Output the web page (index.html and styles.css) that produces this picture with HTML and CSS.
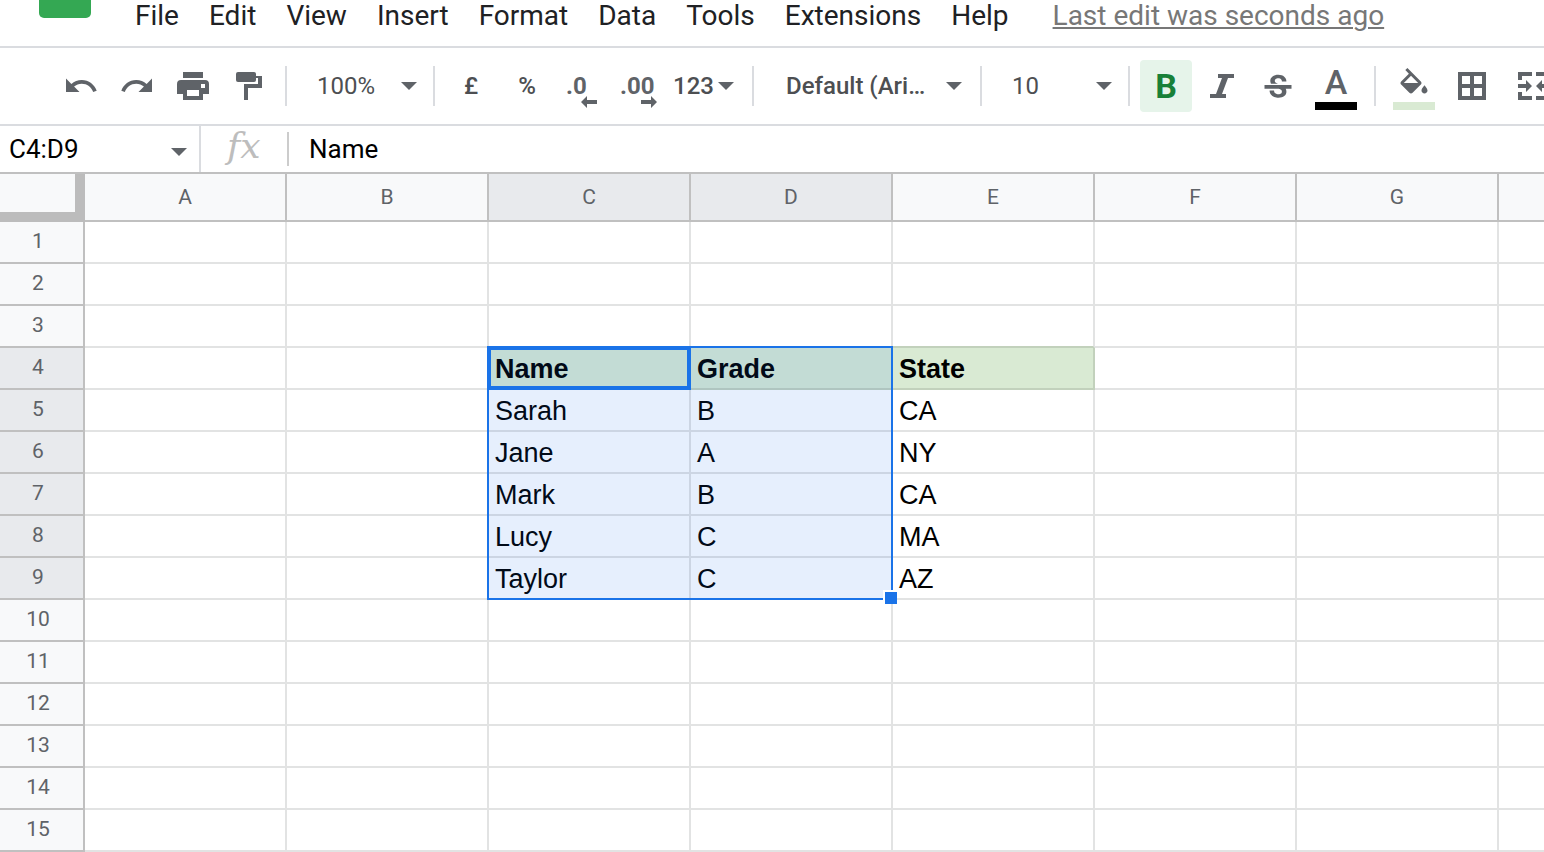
FILE: index.html
```html
<!DOCTYPE html>
<html lang="en">
<head>
<meta charset="utf-8">
<title>Spreadsheet</title>
<link rel="stylesheet" href="styles.css">
</head>
<body>
<header class="menubar">
  <span class="logo"></span>
  <nav class="menus">
    <button>File</button>
    <button>Edit</button>
    <button>View</button>
    <button>Insert</button>
    <button>Format</button>
    <button>Data</button>
    <button>Tools</button>
    <button>Extensions</button>
    <button>Help</button>
  </nav>
  <a class="last-edit" href="#">Last edit was seconds ago</a>
</header>

<div class="toolbar">
  <button class="tool" aria-label="Undo"><svg width="36" height="36" viewBox="0 0 24 24"><path d="M12.5 8c-2.65 0-5.05.99-6.9 2.6L2 7v9h9l-3.62-3.62c1.39-1.16 3.16-1.88 5.12-1.88 3.54 0 6.55 2.31 7.6 5.5l2.37-.78C21.08 11.03 17.15 8 12.5 8z"/></svg></button>
  <button class="tool" aria-label="Redo"><svg width="36" height="36" viewBox="0 0 24 24"><path d="M18.4 10.6C16.55 8.99 14.15 8 11.5 8c-4.65 0-8.58 3.03-9.96 7.22L3.9 16c1.05-3.19 4.05-5.5 7.6-5.5 1.95 0 3.73.72 5.12 1.88L13 16h9V7l-3.6 3.6z"/></svg></button>
  <button class="tool" aria-label="Print"><svg width="32" height="28" viewBox="0 0 32 28"><path fill-rule="evenodd" d="M6 0h20v6H6zM4 8h24a4 4 0 0 1 4 4v10h-6v6H6v-6H0V12a4 4 0 0 1 4-4zM10 18v6h12v-6zM24 12v4h4v-4z"/></svg></button>
  <button class="tool" aria-label="Paint format"><svg width="26" height="28" viewBox="0 0 26 28"><rect width="20" height="10" rx="2"/><path d="M20 4h6v12H12v12H8V12h14V6h-2z"/></svg></button>
  <span class="sep"></span>
  <span class="pick pick-narrow"><select aria-label="Zoom"><option>100%</option></select><i class="caret"></i></span>
  <span class="sep"></span>
  <button class="tool label" aria-label="Format as currency">£</button>
  <button class="tool label" aria-label="Format as percent">%</button>
  <button class="tool" aria-label="Decrease decimal places"><svg width="52" height="52" viewBox="0 0 52 52"><text class="digits" x="9" y="34">.0</text><path d="M24 42l6-6v4h10v4H30v4z"/></svg></button>
  <button class="tool" aria-label="Increase decimal places"><svg width="52" height="52" viewBox="0 0 52 52"><text class="digits" x="7" y="34">.00</text><path d="M44 42l-6-6v4H28v4h10v4z"/></svg></button>
  <button class="tool label formats" aria-label="More formats">123<i class="caret"></i></button>
  <span class="sep"></span>
  <span class="pick pick-font"><select aria-label="Font"><option>Default (Ari…</option></select><i class="caret"></i></span>
  <span class="sep"></span>
  <span class="pick pick-narrow"><select aria-label="Font size"><option>10</option></select><i class="caret"></i></span>
  <span class="sep"></span>
  <button class="tool bold on" aria-label="Bold" aria-pressed="true">B</button>
  <button class="tool" aria-label="Italic"><svg width="24" height="24" viewBox="0 0 24 24"><path d="M8 0h16v4h-6l-6 16h4v4H0v-4h6l6-16H8z"/></svg></button>
  <button class="tool" aria-label="Strikethrough"><svg width="36" height="32" viewBox="0 0 24 21"><path d="M7.24 8.75c-.26-.48-.39-1.03-.39-1.67 0-.61.13-1.16.4-1.67.26-.5.63-.93 1.11-1.29.48-.35 1.05-.63 1.7-.83.66-.19 1.39-.29 2.18-.29.81 0 1.54.11 2.21.34.66.22 1.23.54 1.69.94.47.4.83.88 1.08 1.43.25.55.38 1.15.38 1.81h-3.01c0-.31-.05-.59-.15-.85-.09-.27-.24-.49-.44-.68-.2-.19-.45-.33-.75-.44-.3-.1-.66-.16-1.06-.16-.39 0-.74.04-1.03.13-.29.09-.53.21-.72.36-.19.16-.34.34-.44.55-.1.21-.15.43-.15.66 0 .48.25.88.74 1.21.38.25.77.48 1.41.7H7.39c-.05-.08-.11-.17-.15-.25zM21 12.300v-2.500H3v2.500h9.620c.18.07.4.14.55.2.37.17.66.34.87.51.21.17.35.36.43.57.07.2.11.43.11.69 0 .23-.05.45-.14.66-.09.2-.23.38-.42.53-.19.15-.42.26-.71.35-.29.08-.63.13-1.01.13-.43 0-.83-.04-1.180-.13s-.66-.23-.91-.42c-.25-.19-.45-.44-.59-.75-.14-.31-.25-.76-.25-1.210H6.400c0 .55.08 1.13.24 1.58.16.45.37.85.65 1.21.28.35.6.66.98.92.37.26.78.48 1.220.65.44.17.9.3 1.380.39.48.08.96.13 1.440.13.8 0 1.530-.09 2.180-.28s1.210-.45 1.670-.79c.46-.34.82-.77 1.070-1.270s.38-1.070.38-1.710c0-.6-.1-1.140-.31-1.610-.05-.11-.11-.23-.17-.33H21z"/></svg></button>
  <button class="tool color" aria-label="Text color"><span class="letter">A</span><i class="swatch swatch-text"></i></button>
  <span class="sep"></span>
  <button class="tool color" aria-label="Fill color"><svg width="36" height="26" viewBox="0 0 36 26"><path transform="scale(1.5)" d="M16.56 8.94L7.62 0 6.21 1.41l2.38 2.38-5.15 5.15c-.59.59-.59 1.54 0 2.12l5.5 5.5c.29.29.68.44 1.06.44s.77-.15 1.06-.44l5.5-5.5c.59-.58.59-1.53 0-2.12zM5.21 10L10 5.21 14.79 10H5.21zM19 11.5s-2 2.17-2 3.5c0 1.1.9 2 2 2s2-.9 2-2c0-1.33-2-3.5-2-3.5z"/></svg><i class="swatch swatch-fill"></i></button>
  <button class="tool" aria-label="Borders"><svg width="28" height="28" viewBox="0 0 28 28"><path fill-rule="evenodd" d="M0 0h28v28H0zM4 4v8h8V4zM16 4v8h8V4zM4 16v8h8v-8zM16 16v8h8v-8z"/></svg></button>
  <button class="tool merge" aria-label="Merge cells"><svg width="32" height="28" viewBox="0 0 32 28"><path d="M0 0h14v4H4v4H0zM0 28h14v-4H4v-4H0zM0 12h8V8l6 6-6 6v-4H0zM32 0H18v4h10v4h4zM32 28H18v-4h10v-4h4zM32 12h-8V8l-6 6 6 6v-4h8z"/></svg></button>
</div>

<div class="formula-bar">
  <span class="name-box"><input aria-label="Name box" value="C4:D9"><i class="caret"></i></span>
  <label class="fx" for="formula">fx</label>
  <input class="formula" id="formula" value="Name">
</div>

<main class="sheet">
  <table class="grid">
    <colgroup><col class="col-num"><col><col><col><col><col><col><col><col></colgroup>
    <thead>
      <tr><td class="corner"></td><th>A</th><th>B</th><th class="sel">C</th><th class="sel">D</th><th>E</th><th>F</th><th>G</th><th></th></tr>
    </thead>
    <tbody>
      <tr><th>1</th><td></td><td></td><td></td><td></td><td></td><td></td><td></td><td></td></tr>
      <tr><th>2</th><td></td><td></td><td></td><td></td><td></td><td></td><td></td><td></td></tr>
      <tr><th>3</th><td></td><td></td><td class="edge"></td><td class="edge"></td><td class="edge"></td><td></td><td></td><td></td></tr>
      <tr><th class="sel">4</th><td></td><td></td><td class="head anchor">Name<i class="range"></i><i class="active"></i><i class="handle"></i></td><td class="head">Grade</td><td class="head">State</td><td></td><td></td><td></td></tr>
      <tr><th class="sel">5</th><td></td><td></td><td>Sarah</td><td>B</td><td>CA</td><td></td><td></td><td></td></tr>
      <tr><th class="sel">6</th><td></td><td></td><td>Jane</td><td>A</td><td>NY</td><td></td><td></td><td></td></tr>
      <tr><th class="sel">7</th><td></td><td></td><td>Mark</td><td>B</td><td>CA</td><td></td><td></td><td></td></tr>
      <tr><th class="sel">8</th><td></td><td></td><td>Lucy</td><td>C</td><td>MA</td><td></td><td></td><td></td></tr>
      <tr><th class="sel">9</th><td></td><td></td><td>Taylor</td><td>C</td><td>AZ</td><td></td><td></td><td></td></tr>
      <tr><th>10</th><td></td><td></td><td></td><td></td><td></td><td></td><td></td><td></td></tr>
      <tr><th>11</th><td></td><td></td><td></td><td></td><td></td><td></td><td></td><td></td></tr>
      <tr><th>12</th><td></td><td></td><td></td><td></td><td></td><td></td><td></td><td></td></tr>
      <tr><th>13</th><td></td><td></td><td></td><td></td><td></td><td></td><td></td><td></td></tr>
      <tr><th>14</th><td></td><td></td><td></td><td></td><td></td><td></td><td></td><td></td></tr>
      <tr><th>15</th><td></td><td></td><td></td><td></td><td></td><td></td><td></td><td></td></tr>
    </tbody>
  </table>
</main>
</body>
</html>
```
FILE: styles.css
```css
:root {
  --icon: #5f6368;
  --line: #dadce0;
  --head-line: #c0c0c0;
  --blue: #1a73e8;
  --col: 202px;
  --row: 42px;
}

* { box-sizing: border-box; }

body {
  margin: 0;
  background: #fff;
  font-family: Roboto, "Liberation Sans", sans-serif;
  overflow-x: hidden;
}

button, select, input {
  margin: 0;
  padding: 0;
  border: 0;
  background: none;
  font: inherit;
  color: inherit;
}

/* Menu bar */
.menubar {
  display: flex;
  height: 48px;
  padding-left: 39px;
  border-bottom: 2px solid var(--line);
  font-size: 28px;
  line-height: 32px;
  color: #202124;
  white-space: nowrap;
}
.logo {
  width: 52px;
  height: 18px;
  margin-right: 44px;
  border-radius: 0 0 5px 5px;
  background: #34a853;
}
.menus {
  display: flex;
  align-items: flex-start;
  gap: 30px;
}
.last-edit {
  margin-left: 44px;
  color: #777;
  text-decoration-thickness: 2px;
  text-underline-offset: 2px;
}

/* Toolbar */
.toolbar {
  display: flex;
  align-items: center;
  gap: 4px;
  height: 78px;
  padding-left: 55px;
  border-bottom: 2px solid var(--line);
  overflow: hidden;
  font-size: 24px;
  color: var(--icon);
}
.tool {
  display: flex;
  flex: none;
  align-items: center;
  justify-content: center;
  width: 52px;
  height: 52px;
  border-radius: 4px;
}
.tool svg { fill: currentColor; }
.label, .pick-font { font-weight: 500; color: #4d4f52; }
.digits { font-size: 24px; font-weight: 700; }
.formats {
  justify-content: space-between;
  width: 73px;
  padding: 0 8px 0 4px;
}
.sep {
  flex: none;
  width: 2px;
  height: 40px;
  margin: 0 6px;
  background: var(--line);
}
.caret {
  flex: none;
  border: 8px solid transparent;
  border-top-color: var(--icon);
  border-bottom: 0;
}
.pick {
  display: flex;
  flex: none;
  align-items: center;
  height: 52px;
  padding: 0 6px 0 20px;
  color: #4d4f52;
}
.pick select {
  flex: 1;
  min-width: 0;
  appearance: none;
}
.pick-narrow { width: 126px; }
.pick-font { width: 206px; padding: 0 8px 0 22px; }
.bold { font-size: 34px; font-weight: 700; }
.on { background: #e6f4ea; color: #188038; }
.color {
  flex-direction: column;
  justify-content: flex-end;
  gap: 8px;
  width: 56px;
  padding-bottom: 2px;
}
.letter {
  font-size: 34px;
  font-weight: 500;
  line-height: 24px;
}
.swatch { width: 42px; height: 8px; }
.swatch-text { background: #000; }
.swatch-fill { background: #d9ead3; }
.merge { width: 64px; }

/* Formula bar */
.formula-bar {
  display: flex;
  align-items: center;
  height: 48px;
  border-bottom: 2px solid var(--head-line);
  font-size: 26px;
  color: #000;
}
.name-box {
  display: flex;
  align-items: center;
  align-self: stretch;
  width: 201px;
  padding: 0 12px 0 9px;
  border-right: 2px solid var(--line);
}
.name-box input { flex: 1; min-width: 0; }
.name-box .caret { margin-top: 6px; }
.fx {
  width: 88px;
  height: 34px;
  padding-left: 26px;
  border-right: 2px solid #ccc;
  font: italic 36px/28px "DejaVu Serif", "Liberation Serif", serif;
  color: #bdbdbd;
}
.formula { flex: 1; min-width: 0; padding-left: 20px; }

/* Grid */
.sheet { overflow: hidden; }
.grid {
  width: calc(85px + 8 * var(--col));
  table-layout: fixed;
  border-collapse: separate;
  border-spacing: 0;
}
.grid col { width: var(--col); }
.grid .col-num { width: 85px; }
.grid tr { height: var(--row); }
.grid thead tr { height: 48px; }
.grid td {
  padding: 2px 6px 0;
  border: solid #e2e3e3;
  border-width: 0 2px 2px 0;
  font: 27px/30px "Liberation Sans", Arial, sans-serif;
  color: #000;
}
.grid th {
  padding: 0;
  border: solid var(--head-line);
  border-width: 0 2px 2px 0;
  background: #f8f9fa;
  font-size: 21px;
  font-weight: 400;
  line-height: 24px;
  color: var(--icon);
}
.grid tbody th { padding: 0 7px 2px 0; }
.grid .sel { background: #e8eaed; }
.grid .corner {
  border: solid #bcbcbc;
  border-width: 0 10px 10px 0;
  background: #f8f9fa;
}
.grid .edge { border-bottom-color: #c2d1bc; }
.grid .head {
  border-color: #c2d1bc;
  background: #d9ead3;
  font-weight: 700;
}

/* Selection, drawn over the cells from its top-left cell */
.anchor { position: relative; }
.range, .active, .handle { position: absolute; z-index: 1; }
.range {
  top: -2px;
  left: -2px;
  width: calc(2 * var(--col) + 2px);
  height: calc(6 * var(--row) + 2px);
  border: 2px solid var(--blue);
  background: rgba(14, 101, 235, 0.1);
}
.active {
  top: -2px;
  left: -2px;
  width: calc(var(--col) + 2px);
  height: calc(var(--row) + 2px);
  border: 4px solid var(--blue);
}
.handle {
  top: calc(6 * var(--row) - 10px);
  left: calc(2 * var(--col) - 10px);
  width: 14px;
  height: 14px;
  border: solid #fff;
  border-width: 2px 0 0 2px;
  background: var(--blue);
}
```
